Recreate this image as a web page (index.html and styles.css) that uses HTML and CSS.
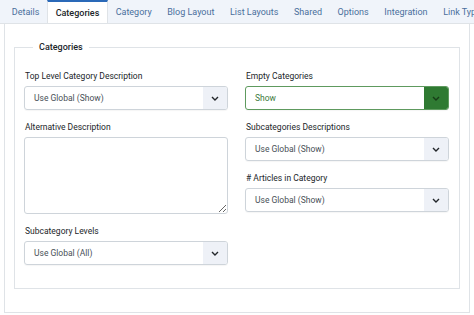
FILE: index.html
```html
<!DOCTYPE html>
<html lang="en">
<head>
    <meta charset="UTF-8">
    <title>Categories</title>
    <link rel="stylesheet" href="styles.css">
</head>
<body>
    <div class="tabs">
        <a href="#">Details</a>
        <a href="#" class="active">Categories</a>
        <a href="#">Category</a>
        <a href="#">Blog Layout</a>
        <a href="#">List Layouts</a>
        <a href="#">Shared</a>
        <a href="#">Options</a>
        <a href="#">Integration</a>
        <a href="#">Link Type</a>
    </div>
    <div class="panel">
        <fieldset>
            <legend>Categories</legend>
            <div class="cols">
                <div class="col">
                    <div class="field">
                        <label>Top Level Category Description</label>
                        <div class="select"><span class="value">Use Global (Show)</span><span class="caret"><svg width="8" height="5" viewBox="0 0 8 5"><path d="M1 1l3 3 3-3" fill="none" stroke="currentColor" stroke-width="1.4"/></svg></span></div>
                    </div>
                    <div class="field">
                        <label>Alternative Description</label>
                        <textarea></textarea>
                    </div>
                    <div class="field">
                        <label>Subcategory Levels</label>
                        <div class="select"><span class="value">Use Global (All)</span><span class="caret"><svg width="8" height="5" viewBox="0 0 8 5"><path d="M1 1l3 3 3-3" fill="none" stroke="currentColor" stroke-width="1.4"/></svg></span></div>
                    </div>
                </div>
                <div class="col">
                    <div class="field">
                        <label>Empty Categories</label>
                        <div class="select green"><span class="value">Show</span><span class="caret"><svg width="8" height="5" viewBox="0 0 8 5"><path d="M1 1l3 3 3-3" fill="none" stroke="currentColor" stroke-width="1.4"/></svg></span></div>
                    </div>
                    <div class="field">
                        <label>Subcategories Descriptions</label>
                        <div class="select"><span class="value">Use Global (Show)</span><span class="caret"><svg width="8" height="5" viewBox="0 0 8 5"><path d="M1 1l3 3 3-3" fill="none" stroke="currentColor" stroke-width="1.4"/></svg></span></div>
                    </div>
                    <div class="field">
                        <label># Articles in Category</label>
                        <div class="select"><span class="value">Use Global (Show)</span><span class="caret"><svg width="8" height="5" viewBox="0 0 8 5"><path d="M1 1l3 3 3-3" fill="none" stroke="currentColor" stroke-width="1.4"/></svg></span></div>
                    </div>
                </div>
            </div>
        </fieldset>
    </div>
</body>
</html>
```

FILE: styles.css
```css
body {
    margin: 0;
    font-family: Roboto, "Liberation Sans", sans-serif;
    font-size: 8.5px;
    color: #22262a;
    background: #fff;
}
.tabs {
    display: flex;
    height: 24px;
    padding-left: 4px;
    background: #f0f4fa;
    border-bottom: 1px solid #dfe3e7;
    box-sizing: border-box;
    white-space: nowrap;
    overflow: hidden;
}
.tabs a {
    display: flex;
    align-items: center;
    padding: 1px 7.8px 0;
    color: #4a6f9c;
    text-decoration: none;
    font-size: 9px;
}
.tabs a.active {
    background: #fff;
    color: #22262a;
    font-weight: 500;
    border-top: 2px solid #2a69b8;
    border-left: 1px solid #dfe3e7;
    border-right: 1px solid #dfe3e7;
    margin-bottom: -1px;
    padding: 0 7.5px;
}
.panel {
    margin: 0 4px;
    padding: 17px 10px 25px 9px;
    border: 1px solid #dfe3e7;
    border-top: none;
    height: 289px;
    box-sizing: border-box;
}
fieldset {
    margin: 0;
    padding: 17px 10px 12px 9px;
    border: 1px solid #dfe3e7;
}
legend {
    margin-left: 9px;
    padding: 0 6px;
    font-size: 9px;
    line-height: 12px;
    font-weight: 500;
}
.cols {
    display: flex;
    gap: 17px;
}
.col {
    width: 204px;
}
.field {
    margin-bottom: 11px;
}
.field label {
    display: block;
    line-height: 12px;
    margin-bottom: 4px;
    padding-left: 1px;
}
.select {
    display: flex;
    height: 24px;
    border: 1px solid #ced4da;
    border-radius: 3px;
    box-sizing: border-box;
    overflow: hidden;
    box-shadow: 0 1px 1px rgba(0,0,0,0.04);
}
.select .value {
    flex: 1;
    display: flex;
    align-items: center;
    padding-left: 9px;
    color: #495057;
}
.select .caret {
    width: 24px;
    display: flex;
    align-items: center;
    justify-content: center;
    background: #eef1f7;
    color: #22262a;
}
.select.green {
    border-color: #5e9a5e;
}
.select.green .value {
    color: #3c7a3c;
}
.select.green .caret {
    background: #2f7a32;
    color: #173d17;
}
textarea {
    display: block;
    width: 204px;
    height: 77px;
    margin: 0;
    border: 1px solid #ced4da;
    border-radius: 3px;
    box-sizing: border-box;
    resize: vertical;
}
```
